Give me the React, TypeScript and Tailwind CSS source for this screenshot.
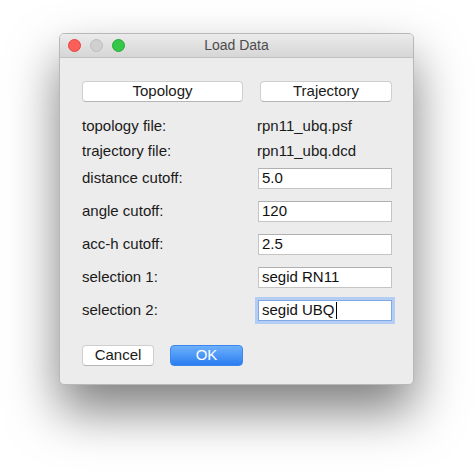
import React from "react";

const font = { fontFamily: '"Liberation Sans", Arial, sans-serif' };

function Field({ value, focused = false }: { value: string; focused?: boolean }) {
  if (focused) {
    return (
      <div className="w-[134px] h-[21px] bg-white border border-[#7ea8e6] ring-[3px] ring-[#b3cdf3] flex items-center pl-[3px] text-[15px] text-[#111]">
        <span>{value}</span>
        <span className="w-px h-[17px] bg-black ml-px"></span>
      </div>
    );
  }
  return (
    <div className="w-[134px] h-[21px] bg-white border border-[#c4c4c4] border-t-[#b0b0b0] flex items-center pl-[3px] text-[15px] text-[#111]">
      {value}
    </div>
  );
}

export default function App() {
  const inputs = [
    { label: "distance cutoff:", value: "5.0" },
    { label: "angle cutoff:", value: "120" },
    { label: "acc-h cutoff:", value: "2.5" },
    { label: "selection 1:", value: "segid RN11" },
    { label: "selection 2:", value: "segid UBQ", focused: true },
  ];

  return (
    <div className="w-[474px] h-[471px] bg-white pt-[33px] pl-[59px] overflow-hidden" style={font}>
      <div className="w-[355px] h-[352px] flex flex-col rounded-[5px] border border-[#b8b8b8] bg-[#ececec] shadow-[0_26px_50px_rgba(0,0,0,0.5)] overflow-hidden">
        {/* Title bar */}
        <div className="relative h-[24px] flex items-center bg-gradient-to-b from-[#ebebeb] to-[#d6d6d6] border-b border-[#c2c2c2]">
          <div className="flex items-center gap-[9px] pl-[8px]">
            <span className="w-[13px] h-[13px] rounded-full bg-[#fc5f57] border border-[#e2463f]"></span>
            <span className="w-[13px] h-[13px] rounded-full bg-[#d0d0d0] border border-[#bdbdbd]"></span>
            <span className="w-[13px] h-[13px] rounded-full bg-[#35c748] border border-[#26a935]"></span>
          </div>
          <div className="absolute inset-0 flex items-center justify-center text-[14px] text-[#4c4c4c]">
            Load Data
          </div>
        </div>

        {/* Body */}
        <div className="flex flex-col pl-[22px] pt-[23px] text-[15px] text-[#1a1a1a]">
          <div className="flex h-[21px]">
            <div className="w-[161px] h-[21px] bg-white rounded-[4px] border border-[#cfcfcf] border-b-[#b5b5b5] flex items-center justify-center">
              Topology
            </div>
            <div className="w-[132px] h-[21px] ml-[17px] bg-white rounded-[4px] border border-[#cfcfcf] border-b-[#b5b5b5] flex items-center justify-center">
              Trajectory
            </div>
          </div>

          <div className="flex items-center h-[25px] mt-[12px]">
            <span className="w-[175px]">topology file:</span>
            <span>rpn11_ubq.psf</span>
          </div>
          <div className="flex items-center h-[25px]">
            <span className="w-[175px]">trajectory file:</span>
            <span>rpn11_ubq.dcd</span>
          </div>

          <div className="flex flex-col gap-[12px] mt-[4px]">
            {inputs.map((row) => (
              <div key={row.label} className="flex items-center h-[21px]">
                <span className="w-[176px]">{row.label}</span>
                <Field value={row.value} focused={row.focused} />
              </div>
            ))}
          </div>

          <div className="flex mt-[24px]">
            <div className="w-[72px] h-[21px] bg-white rounded-[4px] border border-[#cfcfcf] border-b-[#b5b5b5] flex items-center justify-center">
              Cancel
            </div>
            <div className="w-[73px] h-[21px] ml-[16px] rounded-[4px] bg-gradient-to-b from-[#6cb0fb] to-[#2a7df1] border border-[#3d86ee] text-white flex items-center justify-center">
              OK
            </div>
          </div>
        </div>
      </div>
    </div>
  );
}
